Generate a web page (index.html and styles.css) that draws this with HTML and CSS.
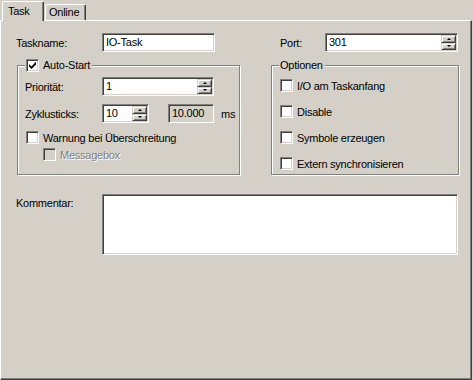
FILE: index.html
```html
<!DOCTYPE html>
<html>
<head>
<meta charset="utf-8">
<link rel="stylesheet" href="styles.css">
</head>
<body>
<div class="tabs">
  <div class="tab tab-active">Task</div>
  <div class="tab tab-online">Online</div>
</div>
<div class="panel">
  <div class="row-top">
    <span class="lbl-name">Taskname:</span>
    <div class="field f-name"><span class="val">IO-Task</span></div>
    <span class="lbl-port">Port:</span>
    <div class="field f-port"><span class="val">301</span><div class="spin"><span class="sb sb-up"></span><span class="sb sb-down"></span></div></div>
  </div>
  <div class="groups">
    <fieldset class="group g-auto">
      <legend class="legend"><span class="cb"><svg class="chk" viewBox="0 0 7 7" width="7" height="7"><polygon points="0,2 2.5,4.5 7,-0.5 7,2.5 2.5,7 0,4.5" fill="#000"/></svg></span>Auto-Start</legend>
      <div class="frow">
        <span class="g-lbl">Priorität:</span>
        <div class="field f-prio"><span class="val">1</span><div class="spin"><span class="sb sb-up"></span><span class="sb sb-down"></span></div></div>
      </div>
      <div class="frow frow-2">
        <span class="g-lbl">Zyklusticks:</span>
        <div class="field f-zyk"><span class="val">10</span><div class="spin"><span class="sb sb-up"></span><span class="sb sb-down"></span></div></div>
        <div class="field f-disp"><span class="val">10.000</span></div>
        <span class="ms">ms</span>
      </div>
      <div class="crow c-warn"><span class="cb"></span><span>Warnung bei Überschreitung</span></div>
      <div class="crow c-msg"><span class="cb cb-dis"></span><span class="dis">Messagebox</span></div>
    </fieldset>
    <fieldset class="group g-opt">
      <legend class="legend legend-opt">Optionen</legend>
      <div class="crow c-opt c-first"><span class="cb"></span><span>I/O am Taskanfang</span></div>
      <div class="crow c-opt"><span class="cb"></span><span>Disable</span></div>
      <div class="crow c-opt"><span class="cb"></span><span>Symbole erzeugen</span></div>
      <div class="crow c-opt"><span class="cb"></span><span>Extern synchronisieren</span></div>
    </fieldset>
  </div>
  <div class="row-comment">
    <span class="lbl-comm">Kommentar:</span>
    <div class="field f-comm"></div>
  </div>
</div>
</body>
</html>
```
FILE: styles.css
```css
* { box-sizing: border-box; }
html, body { margin: 0; padding: 0; }
body {
  width: 473px;
  height: 380px;
  overflow: hidden;
  background: #d4d0c8;
  font-family: "Liberation Sans", Arial, sans-serif;
  font-size: 11px;
  letter-spacing: -0.25px;
  color: #000;
}

.tabs { display: flex; align-items: flex-end; height: 20px; }
.tab {
  height: 16px;
  line-height: 15px;
  background: #d4d0c8;
  border: 1px solid;
  border-bottom: 0;
  border-color: #fff #404040 transparent #fff;
  box-shadow: inset -1px 0 0 #808080;
  border-radius: 2px 2px 0 0;
  white-space: nowrap;
}
.tab-active {
  position: relative;
  z-index: 1;
  width: 42px;
  height: 20px;
  line-height: 18px;
  margin-left: 2px;
  margin-bottom: -1px;
  padding-left: 5px;
}
.tab-online { width: 41px; margin-left: 1px; padding-left: 3px; }

.panel {
  width: 472px;
  height: 360px;
  border: 1px solid;
  border-color: #fff #404040 #404040 #fff;
  box-shadow: inset -1px -1px 0 #808080;
  padding: 12px 0 0 15px;
}

.row-top { display: flex; align-items: center; height: 19px; }
.lbl-name { width: 86px; flex: none; }
.f-name { width: 113px; }
.lbl-port { margin-left: 65px; width: 45px; flex: none; }
.f-port { width: 133px; }

.field {
  height: 19px;
  display: flex;
  align-items: stretch;
  background: #fff;
  border: 1px solid;
  border-color: #808080 #fff #fff #808080;
  box-shadow: inset 1px 1px 0 #404040, inset -1px -1px 0 #d4d0c8;
  padding: 1px;
  flex: none;
}
.val { flex: 1; padding-left: 2px; line-height: 15px; white-space: nowrap; }
.spin { display: flex; flex-direction: column; width: 15px; flex: none; }
.sb {
  flex: 1;
  background: #d4d0c8;
  border: 1px solid;
  border-color: #d4d0c8 #404040 #404040 #d4d0c8;
  box-shadow: inset 1px 1px 0 #fff, inset -1px -1px 0 #808080;
  display: flex;
  align-items: center;
  justify-content: center;
}
.sb::before {
  content: "";
  width: 0;
  height: 0;
  border-left: 2px solid transparent;
  border-right: 2px solid transparent;
}
.sb-up::before { border-bottom: 2px solid #000; }
.sb-down::before { border-top: 2px solid #000; }

.groups { display: flex; margin-top: 7px; margin-left: 1px; }
.group {
  margin: 0;
  padding: 5px 7px 0 7px;
  border: 1px solid #808080;
  box-shadow: 1px 1px 0 #fff, inset 1px 1px 0 #fff;
  height: 116px;
  min-width: 0;
}
.g-auto { width: 223px; }
.g-opt { width: 188px; margin-left: 31px; padding-top: 7px; }
.legend {
  display: flex;
  align-items: center;
  gap: 4px;
  margin: 0;
  padding: 0 2px 0 1px;
  background: #d4d0c8;
  line-height: 13px;
  height: 13px;
}

.frow { display: flex; align-items: center; height: 19px; }
.frow-2 { margin-top: 8px; }
.g-lbl { width: 77px; flex: none; }
.f-prio { width: 112px; }
.f-zyk { width: 47px; }
.f-disp { width: 46px; margin-left: 19px; background: #d4d0c8; }
.ms { margin-left: 7px; flex: none; white-space: nowrap; }

.crow { display: flex; align-items: center; gap: 4px; height: 13px; white-space: nowrap; }
.c-warn { margin-top: 8px; margin-left: 1px; }
.c-msg { margin-top: 4px; margin-left: 18px; }
.c-opt { margin-left: 1px; margin-top: 13px; }
.c-opt.c-first { margin-top: 0; }

.cb {
  width: 13px;
  height: 13px;
  flex: none;
  background: #fff;
  border: 1px solid;
  border-color: #808080 #fff #fff #808080;
  box-shadow: inset 1px 1px 0 #404040, inset -1px -1px 0 #d4d0c8;
  display: flex;
  align-items: center;
  justify-content: center;
}
.cb-dis { background: #d4d0c8; }
.chk { display: block; }
.dis { color: #808080; text-shadow: 1px 1px 0 #fff; }

.row-comment { display: flex; margin-top: 19px; }
.lbl-comm { width: 86px; padding-top: 3px; flex: none; }
.f-comm { width: 356px; height: 61px; }
```
